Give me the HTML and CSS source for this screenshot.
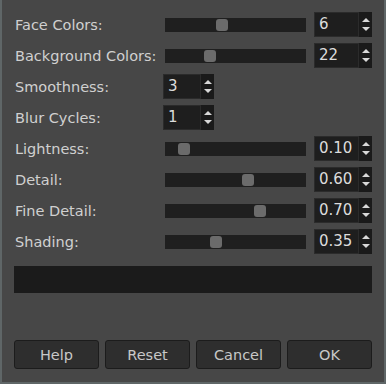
FILE: index.html
```html
<!DOCTYPE html>
<html lang="en">

<head>
    <meta charset="UTF-8">
    <meta name="viewport" content="width=device-width, initial-scale=1.0">
    <title>Cartoon</title>
    <link rel="stylesheet" href="styles.css">
</head>

<body>
    <div class="dialog">
        <div class="rows">
            <div class="row">
                <span class="label">Face Colors:</span>
                <div class="track"><span class="thumb" style="left: 51px"></span></div>
                <div class="spin">
                    <span class="spin-value">6</span>
                    <span class="spin-btns"><i class="up"></i><i class="down"></i></span>
                </div>
            </div>
            <div class="row">
                <span class="label">Background Colors:</span>
                <div class="track"><span class="thumb" style="left: 39px"></span></div>
                <div class="spin">
                    <span class="spin-value">22</span>
                    <span class="spin-btns"><i class="up"></i><i class="down"></i></span>
                </div>
            </div>
            <div class="row">
                <span class="label">Smoothness:</span>
                <div class="spin spin-small">
                    <span class="spin-value">3</span>
                    <span class="spin-btns"><i class="up"></i><i class="down"></i></span>
                </div>
            </div>
            <div class="row">
                <span class="label">Blur Cycles:</span>
                <div class="spin spin-small">
                    <span class="spin-value">1</span>
                    <span class="spin-btns"><i class="up"></i><i class="down"></i></span>
                </div>
            </div>
            <div class="row">
                <span class="label">Lightness:</span>
                <div class="track"><span class="thumb" style="left: 13px"></span></div>
                <div class="spin">
                    <span class="spin-value">0.10</span>
                    <span class="spin-btns"><i class="up"></i><i class="down"></i></span>
                </div>
            </div>
            <div class="row">
                <span class="label">Detail:</span>
                <div class="track"><span class="thumb" style="left: 77px"></span></div>
                <div class="spin">
                    <span class="spin-value">0.60</span>
                    <span class="spin-btns"><i class="up"></i><i class="down"></i></span>
                </div>
            </div>
            <div class="row">
                <span class="label">Fine Detail:</span>
                <div class="track"><span class="thumb" style="left: 89px"></span></div>
                <div class="spin">
                    <span class="spin-value">0.70</span>
                    <span class="spin-btns"><i class="up"></i><i class="down"></i></span>
                </div>
            </div>
            <div class="row">
                <span class="label">Shading:</span>
                <div class="track"><span class="thumb" style="left: 45px"></span></div>
                <div class="spin">
                    <span class="spin-value">0.35</span>
                    <span class="spin-btns"><i class="up"></i><i class="down"></i></span>
                </div>
            </div>
        </div>

        <div class="preview-bar"></div>

        <div class="actions">
            <button class="btn">Help</button>
            <button class="btn">Reset</button>
            <button class="btn">Cancel</button>
            <button class="btn">OK</button>
        </div>
    </div>
</body>

</html>
```

FILE: styles.css
```css
:root {
    --bg: #474747;
    --frame: #5f6667;
    --field: #1e1e1e;
    --field-border: #2b2b2b;
    --text: #d0d0d0;
}

* {
    margin: 0;
    padding: 0;
    box-sizing: border-box;
}

html,
body {
    height: 100%;
}

body {
    background: var(--bg);
    color: var(--text);
    font-family: "DejaVu Sans", sans-serif;
    font-size: 14.5px;
}

.dialog {
    height: 384px;
    border: 2px solid var(--frame);
    border-top: none;
    padding: 12px 12px 13px;
    display: flex;
    flex-direction: column;
}

.rows {
    display: flex;
    flex-direction: column;
    gap: 6px;
}

.row {
    display: flex;
    align-items: center;
    height: 25px;
}

.label {
    width: 149px;
    flex-shrink: 0;
    padding-left: 1px;
}

.track {
    position: relative;
    width: 141px;
    height: 14px;
    margin-left: 2px;
    margin-right: 8px;
    background: #1f1f1f;
}

.thumb {
    position: absolute;
    top: 1px;
    width: 12px;
    height: 12px;
    border-radius: 3px;
    background: #6b6b6b;
}

.spin {
    display: flex;
    width: 58px;
    height: 25px;
}

.spin-small {
    width: 51px;
}

.spin-value {
    flex: 1;
    background: var(--field);
    border: 1px solid var(--field-border);
    padding-left: 4px;
    line-height: 23px;
    font-size: 15px;
    color: #dcdcdc;
}

.spin-btns {
    width: 13px;
    background: #1a1a1a;
    display: flex;
    flex-direction: column;
    align-items: center;
    justify-content: space-around;
    padding: 3px 0;
}

.spin-btns i {
    width: 0;
    height: 0;
    border-left: 4px solid transparent;
    border-right: 4px solid transparent;
}

.spin-btns .up {
    border-bottom: 4px solid #d8d8d8;
}

.spin-btns .down {
    border-top: 4px solid #d8d8d8;
}

.preview-bar {
    margin-top: 12px;
    height: 27px;
    background: #1b1b1b;
}

.actions {
    margin-top: auto;
    display: flex;
    gap: 6px;
}

.btn {
    flex: 1;
    height: 29px;
    background: #2e2e2e;
    border: 1px solid #1c1c1c;
    border-radius: 3px;
    color: #c8c8c8;
    font-family: inherit;
    font-size: 14.5px;
}
```
